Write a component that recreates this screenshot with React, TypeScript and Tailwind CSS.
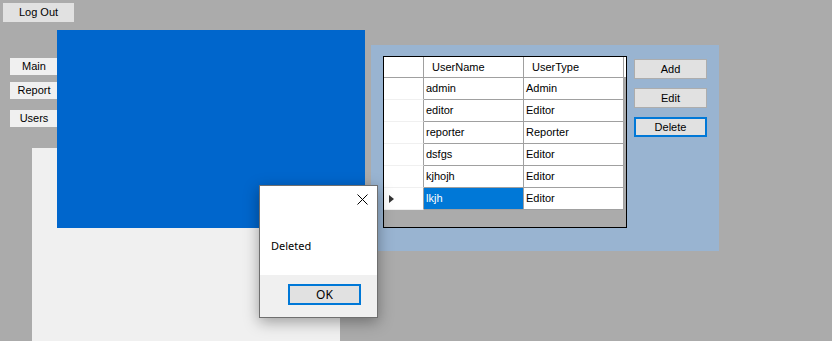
import React from "react";

const USERS = [
  { name: "admin", type: "Admin" },
  { name: "editor", type: "Editor" },
  { name: "reporter", type: "Reporter" },
  { name: "dsfgs", type: "Editor" },
  { name: "kjhojh", type: "Editor" },
  { name: "lkjh", type: "Editor" },
];

const SELECTED = 5;

function SideButton({ label }: { label: string }) {
  return (
    <div className="w-[48px] h-[17px] bg-[#f0f0f0] flex items-center justify-center text-[11px] text-black">
      {label}
    </div>
  );
}

function FormButton({ label, focused }: { label: string; focused?: boolean }) {
  return (
    <div
      className={
        focused
          ? "w-[73px] h-[20px] bg-[#e1e1e1] border-2 border-[#0078d7] flex items-center justify-center text-[11px] text-black"
          : "w-[73px] h-[20px] bg-[#e1e1e1] border border-[#adadad] flex items-center justify-center text-[11px] text-black"
      }
    >
      {label}
    </div>
  );
}

function UserGrid() {
  return (
    <div className="w-[244px] h-[172px] border border-black bg-[#ababab] flex flex-col">
      {/* header */}
      <div className="flex h-[21px] shrink-0">
        <div className="w-[40px] bg-white border-r border-b border-[#a0a0a0]" />
        <div className="w-[100px] bg-white border-r border-b border-[#a0a0a0] pl-[8px] flex items-center">
          UserName
        </div>
        <div className="w-[100px] bg-white border-r border-b border-[#a0a0a0] pl-[8px] flex items-center">
          UserType
        </div>
        <div className="flex-1 bg-white border-b border-[#a0a0a0]" />
      </div>

      {USERS.map((u, i) => (
        <div key={u.name} className="flex h-[22px] shrink-0">
          <div className="w-[40px] bg-white border-r border-[#a0a0a0] border-b border-b-[#f0f0f0] flex items-center pl-[5px]">
            {i === SELECTED && (
              <svg width="5" height="8" viewBox="0 0 5 8">
                <path d="M0 0 L5 4 L0 8 Z" fill="#333" />
              </svg>
            )}
          </div>
          <div
            className={
              i === SELECTED
                ? "w-[100px] bg-[#0078d7] text-white border-r border-b border-[#a0a0a0] pl-[2px] flex items-center"
                : "w-[100px] bg-white border-r border-b border-[#a0a0a0] pl-[2px] flex items-center"
            }
          >
            {u.name}
          </div>
          <div className="w-[100px] bg-white border-r border-b border-[#a0a0a0] pl-[2px] flex items-center">
            {u.type}
          </div>
        </div>
      ))}
    </div>
  );
}

export default function App() {
  return (
    <div
      className="relative w-[832px] h-[341px] overflow-hidden bg-[#ababab] text-[11px] text-black"
      style={{ fontFamily: '"Liberation Sans", Arial, sans-serif' }}
    >
      {/* log out */}
      <div className="absolute left-[3px] top-[3px] w-[71px] h-[19px] bg-[#e1e1e1] flex items-center justify-center text-[11px]">
        Log Out
      </div>

      {/* nav buttons */}
      <div className="absolute left-[10px] top-[58px] flex flex-col">
        <SideButton label="Main" />
        <div className="h-[7px]" />
        <SideButton label="Report" />
        <div className="h-[11px]" />
        <SideButton label="Users" />
      </div>

      {/* light content panel */}
      <div className="absolute left-[32px] top-[148px] w-[308px] h-[200px] bg-[#f0f0f0]" />

      {/* blue panel */}
      <div className="absolute left-[57px] top-[30px] w-[308px] h-[198px] bg-[#0066cc]" />

      {/* users panel */}
      <div className="absolute left-[371px] top-[45px] w-[348px] h-[206px] bg-[#99b4d1] flex pl-[12px] pt-[11px] gap-[7px]">
        <UserGrid />
        <div className="flex flex-col gap-[9px] mt-[3px]">
          <FormButton label="Add" />
          <FormButton label="Edit" />
          <FormButton label="Delete" focused />
        </div>
      </div>

      {/* message box */}
      <div className="absolute left-[259px] top-[185px] w-[119px] h-[133px] border border-[#6f6f6f] bg-white flex flex-col shadow-[0_4px_14px_rgba(0,0,0,0.35)]">
        <div className="h-[89px] bg-white relative flex items-center pl-[11px] pt-[32px]">
          <svg
            className="absolute right-[9px] top-[8px]"
            width="11"
            height="11"
            viewBox="0 0 11 11"
          >
            <path d="M0.5 0.5 L10.5 10.5 M10.5 0.5 L0.5 10.5" stroke="#000" strokeWidth="1" />
          </svg>
          <span
            className="text-[11px] text-black"
            style={{ fontFamily: '"Noto Sans", "Open Sans", sans-serif' }}
          >
            Deleted
          </span>
        </div>
        <div className="flex-1 bg-[#f0f0f0] flex justify-end items-start pt-[9px] pr-[16px]">
          <div
            className="w-[73px] h-[21px] bg-[#e1e1e1] border-2 border-[#0078d7] flex items-center justify-center text-[12px]"
            style={{ fontFamily: '"Noto Sans", "Open Sans", sans-serif' }}
          >
            OK
          </div>
        </div>
      </div>
    </div>
  );
}
